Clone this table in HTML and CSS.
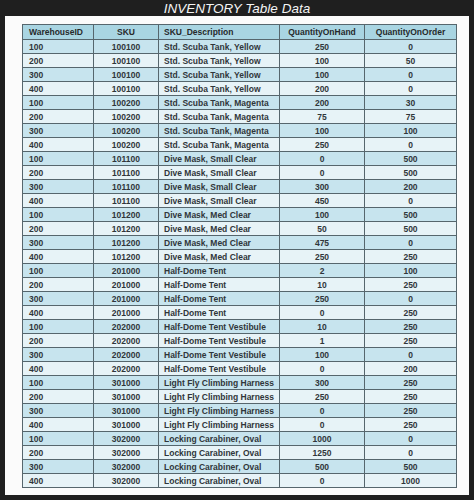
FILE: index.html
```html
<!DOCTYPE html>
<html>
<head>
<meta charset="utf-8">
<link rel="stylesheet" href="styles.css">
</head>
<body>
<div class="page">
  <h1 class="title">INVENTORY Table Data</h1>
  <div class="panel">
    <table class="inv">
      <colgroup>
        <col class="c1"><col class="c2"><col class="c3"><col class="c4"><col class="c5">
      </colgroup>
      <thead>
        <tr><th class="l">WarehouseID</th><th>SKU</th><th class="l">SKU_Description</th><th>QuantityOnHand</th><th>QuantityOnOrder</th></tr>
      </thead>
      <tbody>
        <tr><td class="l">100</td><td>100100</td><td class="l">Std. Scuba Tank, Yellow</td><td>250</td><td>0</td></tr>
        <tr><td class="l">200</td><td>100100</td><td class="l">Std. Scuba Tank, Yellow</td><td>100</td><td>50</td></tr>
        <tr><td class="l">300</td><td>100100</td><td class="l">Std. Scuba Tank, Yellow</td><td>100</td><td>0</td></tr>
        <tr><td class="l">400</td><td>100100</td><td class="l">Std. Scuba Tank, Yellow</td><td>200</td><td>0</td></tr>
        <tr><td class="l">100</td><td>100200</td><td class="l">Std. Scuba Tank, Magenta</td><td>200</td><td>30</td></tr>
        <tr><td class="l">200</td><td>100200</td><td class="l">Std. Scuba Tank, Magenta</td><td>75</td><td>75</td></tr>
        <tr><td class="l">300</td><td>100200</td><td class="l">Std. Scuba Tank, Magenta</td><td>100</td><td>100</td></tr>
        <tr><td class="l">400</td><td>100200</td><td class="l">Std. Scuba Tank, Magenta</td><td>250</td><td>0</td></tr>
        <tr><td class="l">100</td><td>101100</td><td class="l">Dive Mask, Small Clear</td><td>0</td><td>500</td></tr>
        <tr><td class="l">200</td><td>101100</td><td class="l">Dive Mask, Small Clear</td><td>0</td><td>500</td></tr>
        <tr><td class="l">300</td><td>101100</td><td class="l">Dive Mask, Small Clear</td><td>300</td><td>200</td></tr>
        <tr><td class="l">400</td><td>101100</td><td class="l">Dive Mask, Small Clear</td><td>450</td><td>0</td></tr>
        <tr><td class="l">100</td><td>101200</td><td class="l">Dive Mask, Med Clear</td><td>100</td><td>500</td></tr>
        <tr><td class="l">200</td><td>101200</td><td class="l">Dive Mask, Med Clear</td><td>50</td><td>500</td></tr>
        <tr><td class="l">300</td><td>101200</td><td class="l">Dive Mask, Med Clear</td><td>475</td><td>0</td></tr>
        <tr><td class="l">400</td><td>101200</td><td class="l">Dive Mask, Med Clear</td><td>250</td><td>250</td></tr>
        <tr><td class="l">100</td><td>201000</td><td class="l">Half-Dome Tent</td><td>2</td><td>100</td></tr>
        <tr><td class="l">200</td><td>201000</td><td class="l">Half-Dome Tent</td><td>10</td><td>250</td></tr>
        <tr><td class="l">300</td><td>201000</td><td class="l">Half-Dome Tent</td><td>250</td><td>0</td></tr>
        <tr><td class="l">400</td><td>201000</td><td class="l">Half-Dome Tent</td><td>0</td><td>250</td></tr>
        <tr><td class="l">100</td><td>202000</td><td class="l">Half-Dome Tent Vestibule</td><td>10</td><td>250</td></tr>
        <tr><td class="l">200</td><td>202000</td><td class="l">Half-Dome Tent Vestibule</td><td>1</td><td>250</td></tr>
        <tr><td class="l">300</td><td>202000</td><td class="l">Half-Dome Tent Vestibule</td><td>100</td><td>0</td></tr>
        <tr><td class="l">400</td><td>202000</td><td class="l">Half-Dome Tent Vestibule</td><td>0</td><td>200</td></tr>
        <tr><td class="l">100</td><td>301000</td><td class="l">Light Fly Climbing Harness</td><td>300</td><td>250</td></tr>
        <tr><td class="l">200</td><td>301000</td><td class="l">Light Fly Climbing Harness</td><td>250</td><td>250</td></tr>
        <tr><td class="l">300</td><td>301000</td><td class="l">Light Fly Climbing Harness</td><td>0</td><td>250</td></tr>
        <tr><td class="l">400</td><td>301000</td><td class="l">Light Fly Climbing Harness</td><td>0</td><td>250</td></tr>
        <tr><td class="l">100</td><td>302000</td><td class="l">Locking Carabiner, Oval</td><td>1000</td><td>0</td></tr>
        <tr><td class="l">200</td><td>302000</td><td class="l">Locking Carabiner, Oval</td><td>1250</td><td>0</td></tr>
        <tr><td class="l">300</td><td>302000</td><td class="l">Locking Carabiner, Oval</td><td>500</td><td>500</td></tr>
        <tr><td class="l">400</td><td>302000</td><td class="l">Locking Carabiner, Oval</td><td>0</td><td>1000</td></tr>
      </tbody>
    </table>
  </div>
</div>
</body>
</html>
```
FILE: styles.css
```css
html, body {
  margin: 0;
  padding: 0;
  background: #1f1f1f;
}
.page {
  width: 474px;
  height: 500px;
  background: #1f1f1f;
  font-family: "Liberation Sans", Arial, sans-serif;
}
.title {
  margin: 0;
  height: 16px;
  line-height: 17px;
  font-size: 13.5px;
  font-weight: normal;
  font-style: italic;
  color: #f4f4f4;
  text-align: center;
}
.panel {
  margin-left: 5px;
  width: 464px;
  height: 479px;
  background: #fbfbfb;
  box-sizing: border-box;
  padding: 8px 0 0 17px;
}
.inv {
  border-collapse: collapse;
  table-layout: fixed;
  width: 434px;
  font-size: 8.5px;
  color: #262a2c;
}
.c1 { width: 71px; }
.c2 { width: 65px; }
.c3 { width: 121px; }
.c4 { width: 85px; }
.c5 { width: 92px; }
.inv th, .inv td {
  border: 1px solid #56666d;
  padding: 0 0 0 6px;
  text-align: center;
  white-space: nowrap;
  overflow: hidden;
}
.inv th {
  height: 14px;
  font-weight: bold;
  background: #a9d5e2;
}
.inv td {
  height: 13px;
  font-weight: bold;
  color: #30363a;
}
.inv th.l, .inv td.l { text-align: left; }
.inv th:not(.l), .inv td:not(.l) { padding-left: 0; }
.inv th:nth-child(3), .inv td:nth-child(3) { padding-left: 5px; }
.inv tbody tr:nth-child(odd) td { background: #c7e4ee; }
.inv tbody tr:nth-child(even) td { background: #e7f3f7; }
```
